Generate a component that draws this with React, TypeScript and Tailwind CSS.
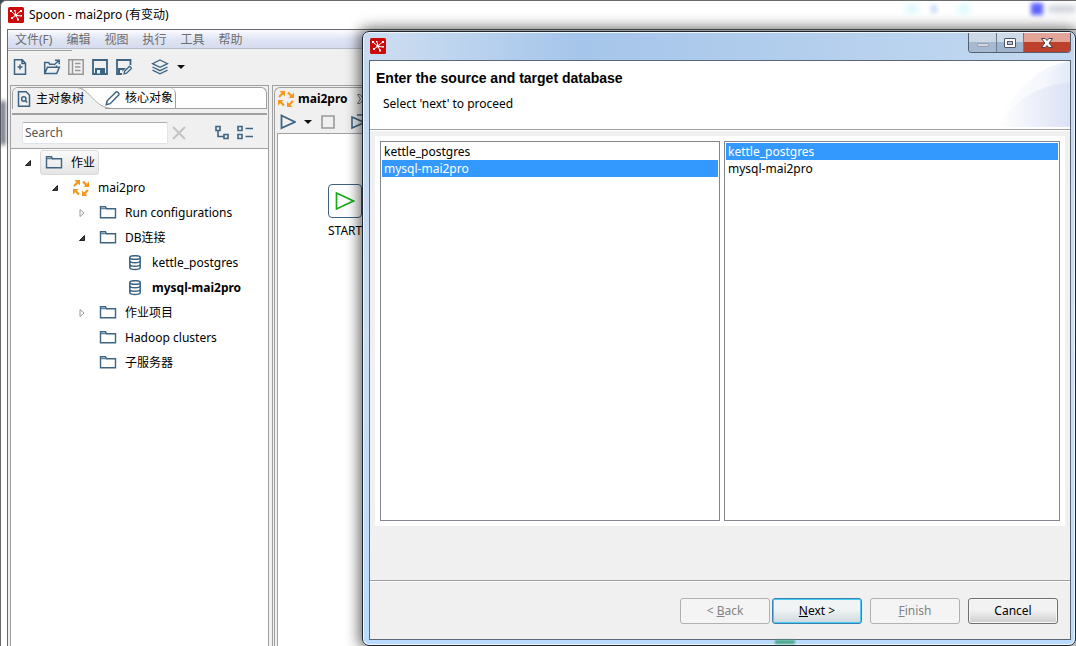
import type { ReactNode } from 'react';
import { clsx } from 'clsx';

const INK = '#3d6482';

const menus = ['文件(F)', '编辑', '视图', '执行', '工具', '帮助'];
const databases = ['kettle_postgres', 'mysql-mai2pro'];

type TreeNode = {
  label: string;
  icon: 'folder' | 'job' | 'db';
  state?: 'open' | 'closed';
  selected?: boolean;
  bold?: boolean;
  children?: TreeNode[];
};

const tree: TreeNode[] = [
  {
    label: '作业',
    icon: 'folder',
    state: 'open',
    selected: true,
    children: [
      {
        label: 'mai2pro',
        icon: 'job',
        state: 'open',
        children: [
          { label: 'Run configurations', icon: 'folder', state: 'closed' },
          {
            label: 'DB连接',
            icon: 'folder',
            state: 'open',
            children: [
              { label: 'kettle_postgres', icon: 'db' },
              { label: 'mysql-mai2pro', icon: 'db', bold: true },
            ],
          },
          { label: '作业项目', icon: 'folder', state: 'closed' },
          { label: 'Hadoop clusters', icon: 'folder' },
          { label: '子服务器', icon: 'folder' },
        ],
      },
    ],
  },
];

type IconProps = { children: ReactNode; className?: string; color?: string; box?: string };

function Icon({ children, className = 'h-4 w-4', color = INK, box = '0 0 16 16' }: IconProps) {
  return (
    <svg
      viewBox={box}
      className={clsx('shrink-0', className)}
      fill="none"
      stroke={color}
      strokeWidth="1.5"
      aria-hidden="true"
    >
      {children}
    </svg>
  );
}

function SpoonLogo() {
  return (
    <Icon color="#fff">
      <rect width="16" height="16" rx="1.5" fill="#cc0a0a" stroke="none" />
      <path d="M3.500 4.500L7.500 8M9 8.500l4 .5M7.500 8.500L4 11M8 8l2 4.500M8 8l4.500-4M7.500 8V4.500" strokeWidth="1" />
      <g fill="#fff" stroke="none">
        <circle cx="7.800" cy="8" r="1.500" />
        <rect x="2" y="3" width="2" height="2" />
        <rect x="6" y="3" width="1.500" height="1.500" />
        <rect x="12" y="3" width="2" height="2" />
        <rect x="12.500" y="8" width="1.500" height="1.500" />
        <rect x="3" y="10" width="2" height="2" />
        <rect x="9" y="11.500" width="2" height="2" />
      </g>
    </Icon>
  );
}

function JobIcon() {
  return (
    <Icon color="#f7981d">
      <path d="M1 6l4.500-4.500M10 1.500L14.500 6M15 10l-4.500 4.500M6 14.500L1.500 10" strokeWidth="2.200" />
      <g fill="#f7981d" stroke="none">
        <path d="M1.500 0H7v5.500z" />
        <path d="M16 1.500V7h-5.500z" />
        <path d="M14.500 16H9v-5.500z" />
        <path d="M0 14.500V9h5.500z" />
      </g>
    </Icon>
  );
}

function FolderIcon() {
  return (
    <Icon box="0 0 18 16" className="h-4 w-[18px]">
      <path d="M1.500 12.700V1.700h5l1 2h9v9z" strokeWidth="1.400" />
      <path d="M2 3.700h6" strokeWidth="1" />
    </Icon>
  );
}

function DbIcon() {
  return (
    <Icon>
      <ellipse cx="8" cy="2.500" rx="5.200" ry="1.800" />
      <path d="M2.800 2.500v10c0 1.200 2.300 2 5.200 2s5.200-.8 5.200-2v-10M2.800 5.800c0 1.200 2.300 2 5.200 2s5.200-.8 5.200-2M2.800 9.200c0 1.200 2.300 2 5.200 2s5.200-.8 5.200-2" />
    </Icon>
  );
}

function NewIcon() {
  return (
    <Icon>
      <path d="M2.500.8h7.700l3.300 3.400v11h-11zM10 1v3.500h3.300M8 5.500v5M5.500 8h5" />
    </Icon>
  );
}

function OpenIcon() {
  return (
    <Icon box="0 0 18 16" className="h-4 w-[18px]">
      <path d="M1.700 14.500V3.500h4l1 1.800h4M13.500 8v-1.500M1.700 14.500l2.800-6.200h11.800l-2.600 6.200zM11 6l4.800-4.500M12 1.200h4.200v4" />
    </Icon>
  );
}

function ExploreIcon() {
  return (
    <Icon color="#979797">
      <path d="M.8.8h14.400v14.400H.8zM4.500 1v14M7 4.500h5.500M7 8h5.500M7 11.500h5.500" />
    </Icon>
  );
}

function SaveIcon() {
  return (
    <Icon>
      <path d="M1 1h14v14H1z" strokeWidth="1.800" />
      <path d="M3 9h10v6H3z" fill={INK} stroke="none" />
      <path d="M5 11h3v3.500H5z" fill="#f0f0f0" stroke="none" />
    </Icon>
  );
}

function SaveAsIcon() {
  return (
    <Icon>
      <path d="M14.500 6V1H1v14h5" strokeWidth="1.800" />
      <path d="M2 9h8l-4 4v2H2z" fill={INK} stroke="none" />
      <path d="M4 11h2.500v3H4z" fill="#f0f0f0" stroke="none" />
      <path d="M8 14.800l.6-2.600 5-5 2 2-5 5z" fill="#f0f0f0" strokeWidth="1.300" />
    </Icon>
  );
}

function LayersIcon() {
  return (
    <Icon box="0 0 18 16" className="h-4 w-[18px]">
      <path d="M9 1l7.500 3.700L9 8.400 1.500 4.700zM1.500 8L9 11.700 16.500 8M1.500 11.200L9 14.900l7.500-3.700" strokeWidth="1.300" />
    </Icon>
  );
}

function Caret() {
  return (
    <Icon box="0 0 8 4" className="h-1 w-2">
      <path d="M0 0h8L4 4z" fill="#111" stroke="none" />
    </Icon>
  );
}

function TreeRow({ node, level }: { node: TreeNode; level: number }) {
  return (
    <li>
      <div className="flex h-[25px] items-center" style={{ paddingLeft: 11 + level * 27 }}>
        <span className="flex w-3 shrink-0 justify-center">
          {node.state === 'open' && (
            <Icon box="0 0 8 8" className="h-2 w-2">
              <path d="M1.500 6.500h5v-5z" fill="#404040" stroke="#222" strokeWidth="1" />
            </Icon>
          )}
          {node.state === 'closed' && (
            <Icon box="0 0 8 10" className="h-2.5 w-2">
              <path d="M2 1.500l4 3.500-4 3.500z" stroke="#999" strokeWidth="1" />
            </Icon>
          )}
        </span>
        <a
          href="#"
          className={clsx(
            'ml-1.5 flex h-[25px] items-center gap-2 rounded-[3px] border pr-[3px] pl-1 leading-5 whitespace-nowrap',
            node.selected
              ? 'border-[#d9d9d9] bg-gradient-to-b from-[#fafafa] to-[#e5e5e5]'
              : 'border-transparent',
            node.bold && 'font-bold',
          )}
        >
          <span className="flex w-[18px] justify-center">
            {node.icon === 'folder' && <FolderIcon />}
            {node.icon === 'job' && <JobIcon />}
            {node.icon === 'db' && <DbIcon />}
          </span>
          {node.label}
        </a>
      </div>
      {node.children && (
        <ul>
          {node.children.map((child) => (
            <TreeRow key={child.label} node={child} level={level + 1} />
          ))}
        </ul>
      )}
    </li>
  );
}

function Toolbar() {
  return (
    <div className="flex h-9 flex-col">
      <div className="mt-px h-px w-16 bg-[#a0a0a0]" />
      <div className="flex flex-1 items-center pb-0.5 pl-1">
        <button type="button" aria-label="New"><NewIcon /></button>
        <button type="button" aria-label="Open" className="ml-[15px]"><OpenIcon /></button>
        <button type="button" aria-label="Explore" className="ml-[7px]"><ExploreIcon /></button>
        <button type="button" aria-label="Save" className="ml-2"><SaveIcon /></button>
        <button type="button" aria-label="Save as" className="ml-2"><SaveAsIcon /></button>
        <button type="button" aria-label="Perspective" className="ml-[19px] flex items-center gap-2">
          <LayersIcon />
          <Caret />
        </button>
      </div>
    </div>
  );
}

function ExplorerPanel() {
  return (
    <section className="flex w-[259px] shrink-0 flex-col border border-b-0 border-[#a0a0a0] bg-[#f0f0f0]">
      <div className="mx-px mt-px flex h-[22px] overflow-hidden rounded-t-md border border-b-0 border-[#a0a0a0] bg-white">
        <button type="button" className="flex items-center gap-1 bg-[#f0f0f0] pl-[3px] whitespace-nowrap">
          <Icon>
            <path d="M2.500.8h7.700l3.300 3.400v11h-11z" />
            <circle cx="7.800" cy="8" r="2.200" />
            <path d="M9.500 9.800l1.700 1.700" />
          </Icon>
          <span className="z-10">主对象树</span>
        </button>
        <Icon box="0 0 36 21" className="-ml-[7px] h-[21px] w-9" color="#a0a0a0">
          <path d="M0 0C14 1 14 20 34 20.500L34 21H0z" fill="#f0f0f0" stroke="none" />
          <path d="M0 -.5C14 1 16 20 36 20.500" strokeWidth="1" />
        </Icon>
        <button
          type="button"
          className="-ml-2 flex items-center gap-1 rounded-tr-md border-r border-b border-[#a0a0a0] pr-0.5 whitespace-nowrap"
        >
          <Icon>
            <path d="M1.200 14.800l1-4L11 2c1-1 3.800 1.600 2.900 2.800L5.200 13.700z" />
          </Icon>
          <span>核心对象</span>
        </button>
        <div className="flex-1 border-b border-[#a0a0a0]" />
      </div>
      <div className="mx-px mt-1 h-0.5 bg-[#a0a0a0]" />
      <div className="flex h-[34px] items-center border-b border-[#a0a0a0] pt-0.5 pl-[11px]">
        <input
          type="text"
          aria-label="Search"
          placeholder="Search"
          className="h-[22px] w-[146px] rounded-[2px] border border-[#dfe3ec] border-t-[#abadb3] bg-white px-0.5 text-[#444] outline-none placeholder:text-[#555]"
        />
        <button type="button" aria-label="Clear" className="ml-[3px]">
          <Icon color="#c4c4c4">
            <path d="M2 2l12 12M14 2L2 14" strokeWidth="2" />
          </Icon>
        </button>
        <button type="button" aria-label="Expand all" className="ml-[27px]">
          <Icon>
            <path d="M2 1.500h4v4H2zM10 9.500h4v4h-4zM4 6v5.500h5.500" strokeWidth="1.600" />
          </Icon>
        </button>
        <button type="button" aria-label="Collapse all" className="ml-1.5">
          <Icon box="0 0 18 16" className="h-4 w-[18px]">
            <path d="M2 1.500h4v4H2zM2 9.500h4v4H2zM9.500 3.500H17M9.500 11.500H17" strokeWidth="1.600" />
          </Icon>
        </button>
      </div>
      <ul className="flex-1 bg-white pt-px">
        {tree.map((node) => (
          <TreeRow key={node.label} node={node} level={0} />
        ))}
      </ul>
    </section>
  );
}

function CanvasPanel() {
  return (
    <section className="ml-[3px] flex min-w-0 flex-1 flex-col border-t border-l border-[#a0a0a0] bg-[#f0f0f0] pl-px">
      <div className="mt-px flex h-[23px] items-center gap-1 rounded-tl-md border-t border-l border-[#a0a0a0] pl-[3px] font-bold">
        <JobIcon />
        <span>mai2pro</span>
        <Icon color="#777" className="ml-1 h-3 w-3" box="0 0 12 12">
          <path d="M1.500 1.500h2.500l2 2.500 2-2.500h2.500l-3 4.500 3 4.500H8L6 8l-2 2.500H1.500l3-4.500z" strokeWidth="1" />
        </Icon>
      </div>
      <div className="flex h-[23px] items-center border-l border-[#a0a0a0] pl-[5px]">
        <button type="button" aria-label="Run" className="flex items-center gap-2">
          <Icon>
            <path d="M1.500 1.500l13.500 6.500-13.500 6z" strokeWidth="1.800" />
          </Icon>
          <Caret />
        </button>
        <button type="button" aria-label="Stop" className="ml-2">
          <Icon color="#999">
            <path d="M2 2h12v12H2z" strokeWidth="1.600" />
          </Icon>
        </button>
        <button type="button" aria-label="Replay" className="ml-3.5">
          <Icon>
            <path d="M2 3l12.500 5.500L2 14zM7 1h8" strokeWidth="1.600" />
          </Icon>
        </button>
      </div>
      <div className="flex flex-1 border-l border-[#a0a0a0] pl-0.5">
        {/* free canvas: steps sit where they were dropped */}
        <div className="relative flex-1 border-t border-l border-[#a0a0a0] bg-white">
          <div className="absolute top-[50px] left-[50px] flex flex-col items-center gap-[3px]">
            <div className="flex h-[34px] w-[34px] items-center justify-center rounded border border-[#3d6482]">
              <Icon color="#17ac17" className="h-5 w-5" box="0 0 20 20">
                <path d="M1.500 2l17 8-17 8z" strokeWidth="1.700" />
              </Icon>
            </div>
            <span className="leading-5">START</span>
          </div>
        </div>
      </div>
    </section>
  );
}

function CaptionButtons() {
  return (
    <div className="mr-[3px] flex h-5 overflow-hidden rounded-b-[4px] border border-t-0 border-[#56606e]">
      <button
        type="button"
        aria-label="Minimize"
        className="flex w-7 items-center justify-center border-r border-[#6d7b8e] bg-gradient-to-b from-[#ccd8e6] from-45% to-[#a6b9d0] to-50%"
      >
        <span className="mt-1 h-1 w-3 rounded-[1px] border border-[#98a3b1] bg-[#ced5de]" />
      </button>
      <button
        type="button"
        aria-label="Maximize"
        className="flex w-[27px] items-center justify-center border-r border-[#6d7b8e] bg-gradient-to-b from-[#cfdae8] from-45% to-[#9fb4ce] to-50%"
      >
        <span className="flex h-2.5 w-3 items-center justify-center rounded-[1px] border border-[#4d5668] bg-white">
          <span className="h-1 w-1.5 border border-[#4d5668] bg-[#b8c6d9]" />
        </span>
      </button>
      <button
        type="button"
        aria-label="Close"
        className="flex w-[46px] items-center justify-center bg-gradient-to-b from-[#e3a598] from-45% to-[#bc402c] to-50%"
      >
        <Icon color="#4d3f4a" className="h-3 w-3" box="0 0 12 12">
          <path d="M.500 1.500h3.700L6 3.500l1.800-2h3.700L8.200 6l3.300 4.500H7.800L6 8.500l-1.800 2H.500L3.800 6z" fill="#fff" strokeWidth="1" />
        </Icon>
      </button>
    </div>
  );
}

function DatabaseList({ label, selected }: { label: string; selected: string }) {
  return (
    <select
      aria-label={label}
      multiple
      defaultValue={[selected]}
      className="h-full w-full appearance-none overflow-hidden border border-[#828790] bg-white p-px text-black outline-none"
    >
      {databases.map((name) => (
        <option
          key={name}
          value={name}
          className="h-[17px] min-h-0 px-0.5 py-0 leading-[17px] checked:bg-[#3399ff] checked:text-white"
        >
          {name}
        </option>
      ))}
    </select>
  );
}

type WizardButtonProps = { children: ReactNode; className?: string; primary?: boolean; disabled?: boolean };

function WizardButton({ children, className, primary, disabled }: WizardButtonProps) {
  return (
    <button
      type="button"
      disabled={disabled}
      className={clsx(
        'h-[26px] w-[90px] rounded-[3px] border',
        disabled && 'border-[#adb2b5] bg-[#f4f4f4] text-[#838383]',
        primary &&
          'border-[#3c7fb1] bg-gradient-to-b from-[#f0f4f5] from-45% to-[#cdd8dc] text-black shadow-[inset_0_0_0_1px_#48cdf5]',
        !disabled &&
          !primary &&
          'border-[#707070] bg-gradient-to-b from-[#f2f2f2] from-45% to-[#cfcfcf] text-black shadow-[inset_0_0_0_1px_#f7f7f7]',
        className,
      )}
    >
      {children}
    </button>
  );
}

function WizardDialog() {
  return (
    <div
      role="dialog"
      aria-labelledby="wizard-title"
      className="absolute top-[31px] right-0 bottom-0 left-[362px] flex flex-col rounded-[7px] border border-[#20262e] bg-gradient-to-b from-[#c3d8ef] via-[#cbdff5] to-[#b8dbff] pr-[3px] pb-[5px] pl-[5px] shadow-[0_0_14px_3px_rgba(0,0,0,0.6),inset_0_0_0_1px_#eef6ff]"
    >
      <div className="-mr-0.5 -ml-1 mt-px flex h-[27px] items-start justify-between rounded-t-md bg-gradient-to-r from-[#c9dbf0] from-5% via-[#a5c5ea] via-30% to-[#c2d8f0] to-95% pl-1">
        <div className="pt-[5px] pl-0.5">
          <SpoonLogo />
        </div>
        <CaptionButtons />
      </div>
      <div className="mx-px flex flex-1 flex-col border border-[#5b6776] bg-[#f0f0f0]">
        <header className="flex h-[69px] justify-between border-b border-[#a0a0a0] bg-white">
          <div className="pt-[7px] pl-1.5">
            <h1 id="wizard-title" className="font-['Liberation_Sans'] text-[14px] leading-5 font-bold">
              Enter the source and target database
            </h1>
            <p className="mt-1.5 pl-[7px] leading-5">Select &apos;next&apos; to proceed</p>
          </div>
          <svg viewBox="0 0 72 66" className="h-[66px] w-[72px]" aria-hidden="true">
            <defs>
              <linearGradient id="sweep">
                <stop offset="0" stopColor="#fff" />
                <stop offset="1" stopColor="#dbe2f5" />
              </linearGradient>
            </defs>
            <path d="M0 66C10 34 40 4 72 0v66z" fill="url(#sweep)" opacity=".45" />
            <path d="M36 34C46 16 58 4 72 0v34z" fill="url(#sweep)" opacity=".6" />
            <path d="M0 66C14 40 44 22 72 22v44z" fill="url(#sweep)" />
          </svg>
        </header>
        <div className="h-px bg-white" />
        <div className="mx-[5px] mt-[5px] mb-[54px] grid flex-1 grid-cols-[340fr_336fr] gap-1 bg-white p-[5px]">
          <DatabaseList label="Source database" selected="mysql-mai2pro" />
          <DatabaseList label="Target database" selected="kettle_postgres" />
        </div>
        <footer className="flex justify-end border-t border-[#a0a0a0] pt-[17px] pr-3 pb-[15px] shadow-[inset_0_1px_0_#fff]">
          <WizardButton disabled>
            &lt; <u>B</u>ack
          </WizardButton>
          <WizardButton primary className="ml-0.5">
            <u>N</u>ext &gt;
          </WizardButton>
          <WizardButton disabled className="ml-2">
            <u>F</u>inish
          </WizardButton>
          <WizardButton className="ml-2">Cancel</WizardButton>
        </footer>
      </div>
      {/* desktop colour glowing through the bottom frame */}
      <div className="absolute right-[280px] bottom-px h-1 w-5 bg-[#4aa886] blur-[1px]" />
    </div>
  );
}

export default function App() {
  return (
    <div className="relative flex h-screen flex-col overflow-hidden bg-[#3c4450] font-['Noto_Sans','Noto_Sans_CJK_SC',sans-serif] text-[12px] text-black">
      <div className="flex flex-1 flex-col rounded-tl-md border-t border-l border-[#6a6a6a] bg-white pl-1.5">
        <div className="flex h-7 items-center gap-[5px] pl-px">
          <SpoonLogo />
          <span className="flex-1 leading-5">Spoon - mai2pro (有变动)</span>
          {/* desktop showing through the glass */}
          <span className="mb-3 h-2 w-3 bg-[#b8f4fb] opacity-60 blur-[3px]" />
          <span className="mr-4 mb-3 ml-2 h-2 w-1.5 bg-[#b8d4fb] opacity-80 blur-[2px]" />
          <span className="mr-14 mb-3 h-2 w-3 bg-[#b8f4fb] opacity-60 blur-[3px]" />
          <span className="mb-3 h-3 w-3 bg-[#4a52ff] opacity-90 blur-[2px]" />
          <span className="mb-3 h-1.5 w-7 bg-[#9aa3b5] opacity-60 blur-[3px]" />
        </div>
        <div className="flex flex-1 flex-col border-t border-l border-[#6a6a6a] bg-[#f0f0f0]">
          <nav className="flex h-[19px] items-center gap-3.5 border-b border-[#b6bccc] bg-gradient-to-b from-[#fbfcfe] via-[#e0e5f4] to-[#d5dcef] pt-0.5 pl-[7px] text-[#6d6d6d]">
            {menus.map((menu) => (
              <button key={menu} type="button" className="leading-4 whitespace-nowrap">
                {menu}
              </button>
            ))}
          </nav>
          <Toolbar />
          <div className="flex flex-1 pl-0.5">
            <ExplorerPanel />
            <CanvasPanel />
          </div>
        </div>
      </div>
      {/* dark window behind the left glass edge */}
      <div className="absolute top-[101px] left-px h-11 w-1 bg-[#2c3448] opacity-90 blur-[2px]" />
      <WizardDialog />
    </div>
  );
}
